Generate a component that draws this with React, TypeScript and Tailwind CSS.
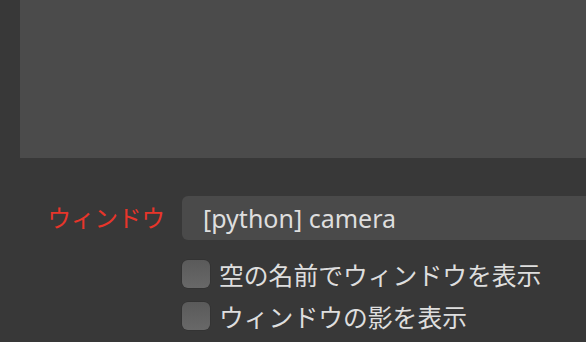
import React from "react";

const font = { fontFamily: '"Noto Sans CJK JP", "Noto Sans", sans-serif' };

function Check({ label }: { label: string }) {
  return (
    <div className="flex items-center gap-[9px] h-[28px]">
      <div className="w-[28px] h-[28px] rounded-[6px] bg-gradient-to-b from-[#5a5a5a] to-[#686868] shadow-[0_0_0_0.5px_#2e2e2e]" />
      <span className="text-[24.8px] leading-none text-[#dedede]">{label}</span>
    </div>
  );
}

export default function App() {
  return (
    <div className="w-[586px] h-[342px] bg-[#383838] overflow-hidden flex flex-col" style={font}>
      <div className="ml-[20px] h-[158px] bg-[#4b4b4b]" />
      <div className="flex items-center mt-[38px] h-[44px]">
        <div className="w-[182px] pr-[17px] text-right text-[23.5px] leading-none text-[#e8352a]">ウィンドウ</div>
        <div className="flex-1 h-[44px] bg-[#4a4a4a] rounded-l-[6px] flex items-center pl-[21px]">
          <span className="text-[25px] leading-none text-[#dedede]" style={{ fontFamily: '"Noto Sans", "Noto Sans CJK JP", sans-serif' }}>
            [python] camera
          </span>
        </div>
      </div>
      <div className="ml-[182px] mt-[20px] flex flex-col gap-[14px]">
        <Check label="空の名前でウィンドウを表示" />
        <Check label="ウィンドウの影を表示" />
      </div>
    </div>
  );
}
